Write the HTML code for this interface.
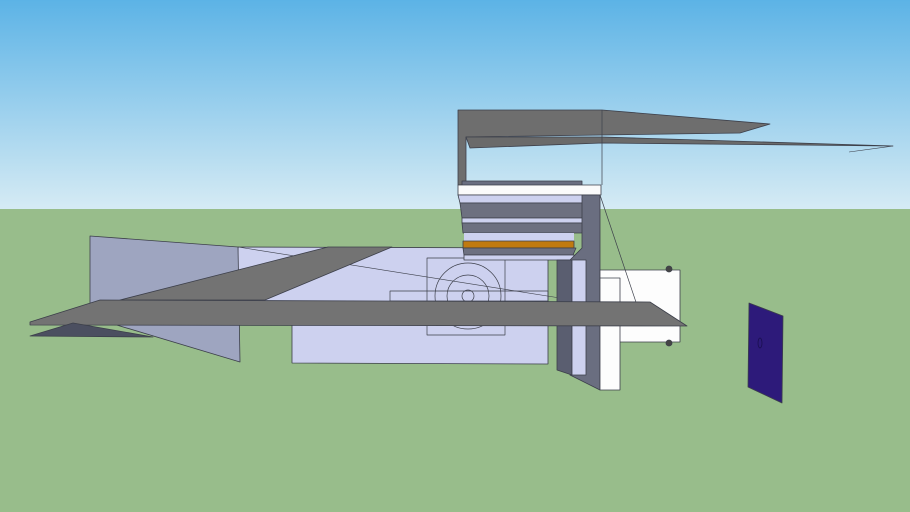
<!DOCTYPE html>
<html><head><style>html,body{margin:0;padding:0;width:910px;height:512px;overflow:hidden}</style></head>
<body>
<svg width="910" height="512" viewBox="0 0 910 512" xmlns="http://www.w3.org/2000/svg">
<defs><linearGradient id="sky" x1="0" y1="0" x2="0" y2="1">
<stop offset="0" stop-color="#5cb3e6"/><stop offset="1" stop-color="#d6ebf4"/></linearGradient></defs>
<rect x="0" y="0" width="910" height="210" fill="url(#sky)"/>
<rect x="0" y="209" width="910" height="303" fill="#98bd8b"/>
<g stroke="#3c3f4a" stroke-width="0.8" stroke-linejoin="round">
<!-- light box -->
<polygon points="238,247 548,248 548,364 292,363 292,325 238,325" fill="#cdd1ef"/>
<!-- fin -->
<polygon points="90,236 238,247 240,362 110,323 90,306" fill="#9ea5c0"/>
<line x1="238" y1="247" x2="560" y2="298" stroke-width="0.6"/>
<!-- target drawing -->
<g fill="none" stroke-width="0.7">
<rect x="427" y="258" width="78" height="77"/>
<rect x="390" y="291" width="158" height="10"/>
<circle cx="468" cy="296" r="33"/>
<circle cx="468" cy="296" r="21"/>
<circle cx="468" cy="296" r="6"/>
</g>
<!-- diagonal wing -->
<polygon points="120,300 265,300 392,247 328,247" fill="#737373"/>
<!-- canopy -->
<polygon points="458,110 602,110 770,124 740,133 602,135 466,137 466,185 458,185" fill="#6e6e6e"/>
<polygon points="466,137 602,137 893,146 602,143 470,148" fill="#6a6a6a"/>
<line x1="849" y1="152" x2="893" y2="146" stroke-width="0.6"/>
<line x1="602" y1="110" x2="602" y2="185" stroke-width="0.7"/>
<!-- slabs -->
<rect x="462" y="181" width="120" height="5" fill="#6a6e80"/>
<rect x="458" y="185" width="143" height="10" fill="#fbfbfb"/>
<polygon points="458,195 597,195 593,203 460,203" fill="#cdd1ef"/>
<polygon points="460,203 593,203 587,218 462,218" fill="#6d7080"/>
<polygon points="462,218 587,218 585,223 462,223" fill="#cdd1ef"/>
<polygon points="462,223 585,223 582,233 463,233" fill="#6d7080"/>
<rect x="464" y="233" width="110" height="8" fill="#cdd1ef" stroke="none"/>
<rect x="463" y="241" width="111" height="7" fill="#c07a10"/>
<polygon points="463,248 576,248 573,255 464,255" fill="#6d7080"/>
<rect x="464" y="255" width="110" height="5" fill="#cdd1ef"/>
<!-- dark column -->
<polygon points="582,195 600,195 600,390 570,375 570,260 582,248" fill="#6a6e80"/>
<polygon points="557,260 572,260 572,375 557,370" fill="#5a5e70"/>
<rect x="572" y="260" width="14" height="115" fill="#cdd1ef"/>
<!-- white block -->
<rect x="600" y="270" width="80" height="72" fill="#fdfdfd"/>
<rect x="600" y="278" width="20" height="112" fill="#fdfdfd"/>
<ellipse cx="669" cy="269" rx="3" ry="3" fill="#444"/>
<ellipse cx="669" cy="343" rx="3" ry="3" fill="#444"/>
<line x1="600" y1="195" x2="643" y2="323" stroke-width="0.7"/>
<!-- main wing -->
<polygon points="30,322 100,300 650,302 687,326 30,325" fill="#737373"/>
<polygon points="30,336 73,323 153,337" fill="#4b4f60"/>
<!-- purple panel -->
<polygon points="749,303 783,316 782,403 748,387" fill="#2d1a7a"/>
<ellipse cx="760" cy="343" rx="2" ry="5" fill="none" stroke="#1a0f50"/>
</g>
</svg>
</body></html>
